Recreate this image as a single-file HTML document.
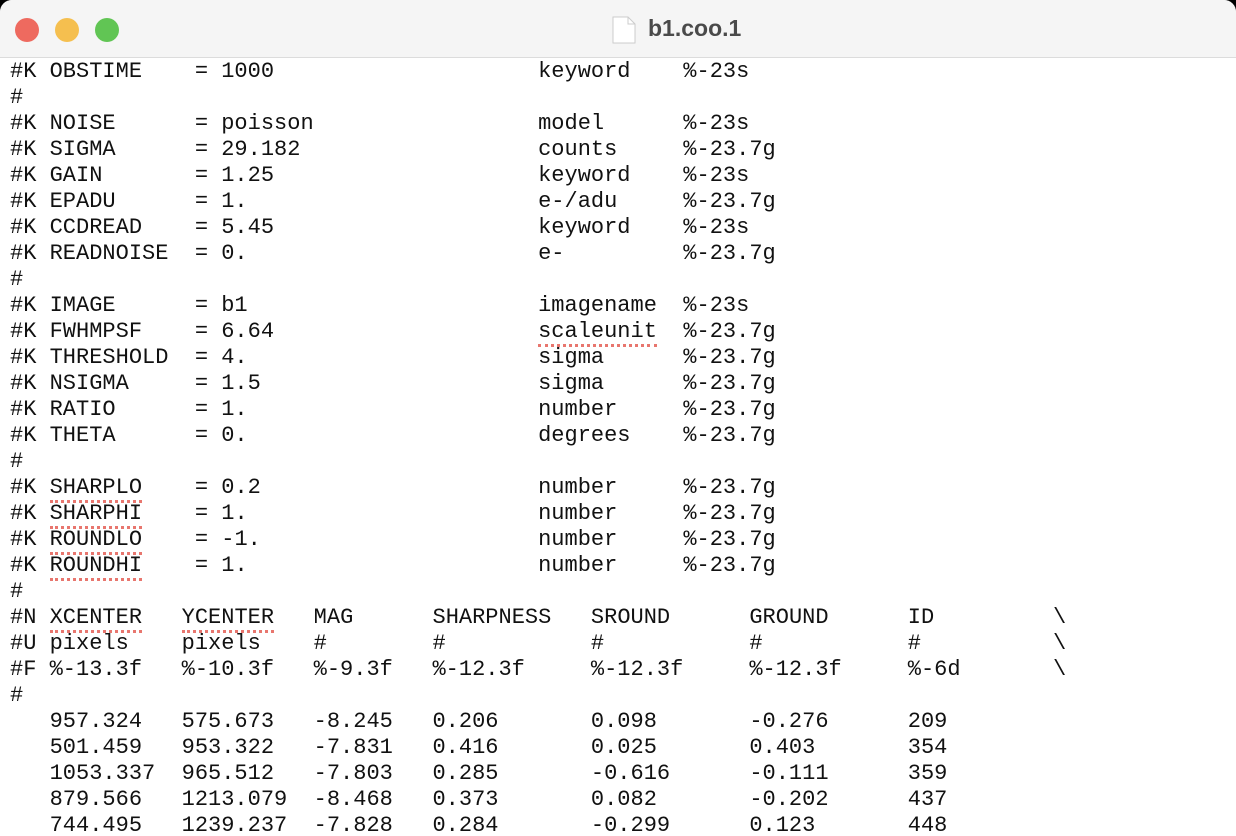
<!DOCTYPE html>
<html><head><style>
body{margin:0;width:1236px;height:836px;background:#000;overflow:hidden;}
.win{position:absolute;left:0;top:0;width:1236px;height:836px;background:#fff;border-radius:12px 12px 0 0;overflow:hidden;}
.bar{position:absolute;left:0;top:0;width:1236px;height:57px;background:#f5f5f5;border-bottom:1px solid #dcdcdc;}
.c{position:absolute;top:18px;width:24px;height:24px;border-radius:50%;}
.t{position:absolute;left:648px;top:15px;font:bold 23px "Liberation Sans",sans-serif;color:#4a4a4a;}
pre{position:absolute;left:10px;top:59px;margin:0;font:22px/26px "Liberation Mono",monospace;color:#111;}
u{text-decoration:none;border-bottom:3px dotted #e8766e;}
</style></head><body><div class="win">
<div class="bar">
<div class="c" style="left:15px;background:#ee6a5f;border:0"></div>
<div class="c" style="left:55px;background:#f5bf4f"></div>
<div class="c" style="left:95px;background:#61c554"></div>
<svg style="position:absolute;left:612px;top:16px" width="24" height="28"><path d="M1 1H16L23 8V27H1Z" fill="#fff" stroke="#ccc"/><path d="M16 1V8H23" fill="none" stroke="#ccc"/></svg>
<div class="t">b1.coo.1</div>
</div>
<pre>#K OBSTIME    = 1000                    keyword    %-23s
#
#K NOISE      = poisson                 model      %-23s
#K SIGMA      = 29.182                  counts     %-23.7g
#K GAIN       = 1.25                    keyword    %-23s
#K EPADU      = 1.                      e-/adu     %-23.7g
#K CCDREAD    = 5.45                    keyword    %-23s
#K READNOISE  = 0.                      e-         %-23.7g
#
#K IMAGE      = b1                      imagename  %-23s
#K FWHMPSF    = 6.64                    <u>scaleunit</u>  %-23.7g
#K THRESHOLD  = 4.                      sigma      %-23.7g
#K NSIGMA     = 1.5                     sigma      %-23.7g
#K RATIO      = 1.                      number     %-23.7g
#K THETA      = 0.                      degrees    %-23.7g
#
#K <u>SHARPLO</u>    = 0.2                     number     %-23.7g
#K <u>SHARPHI</u>    = 1.                      number     %-23.7g
#K <u>ROUNDLO</u>    = -1.                     number     %-23.7g
#K <u>ROUNDHI</u>    = 1.                      number     %-23.7g
#
#N <u>XCENTER</u>   <u>YCENTER</u>   MAG      SHARPNESS   SROUND      GROUND      ID         \
#U pixels    pixels    #        #           #           #           #          \
#F %-13.3f   %-10.3f   %-9.3f   %-12.3f     %-12.3f     %-12.3f     %-6d       \
#
   957.324   575.673   -8.245   0.206       0.098       -0.276      209
   501.459   953.322   -7.831   0.416       0.025       0.403       354
   1053.337  965.512   -7.803   0.285       -0.616      -0.111      359
   879.566   1213.079  -8.468   0.373       0.082       -0.202      437
   744.495   1239.237  -7.828   0.284       -0.299      0.123       448</pre>
</div></body></html>
